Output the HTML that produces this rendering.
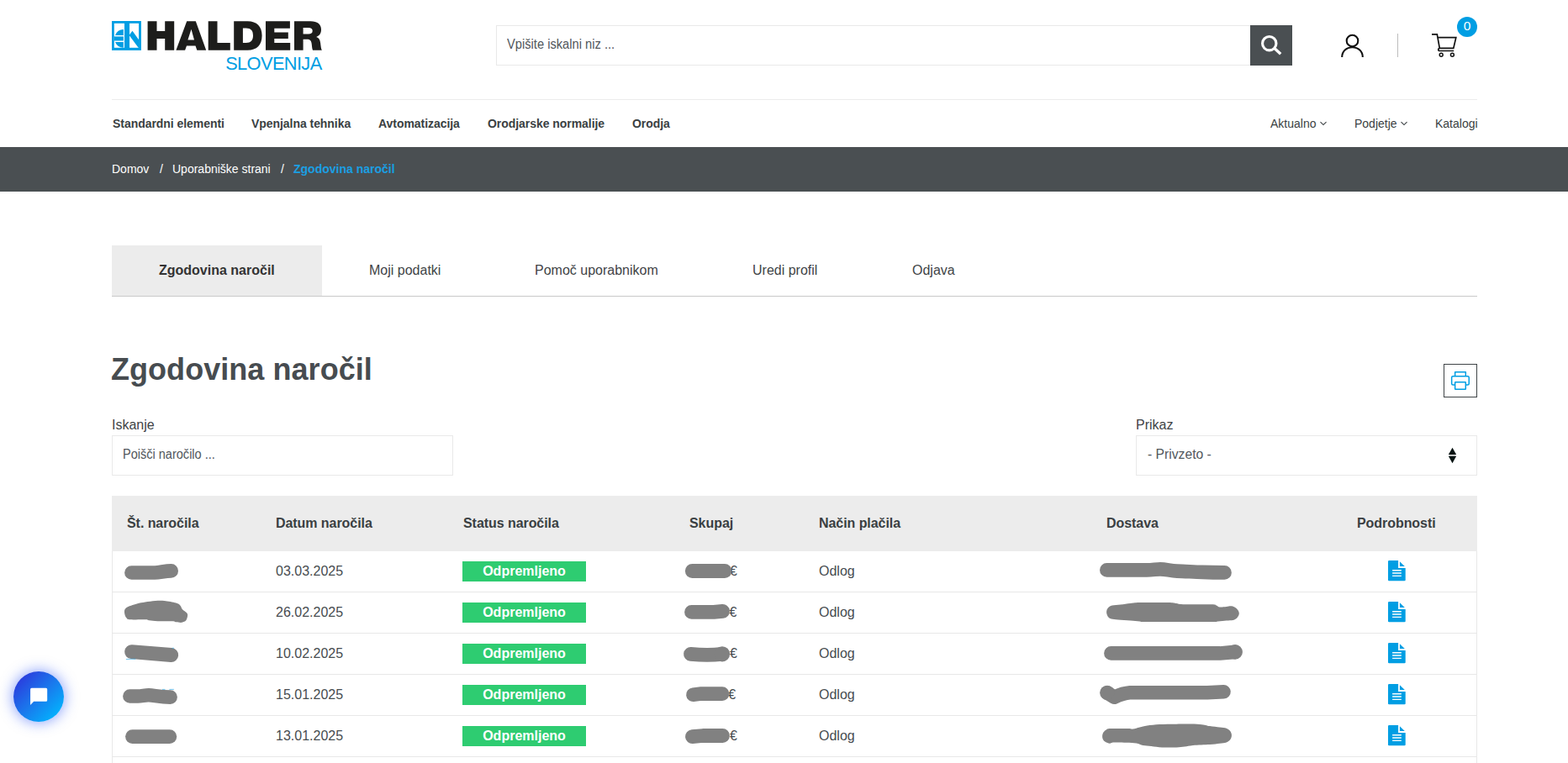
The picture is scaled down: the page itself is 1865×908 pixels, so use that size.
<!DOCTYPE html>
<html lang="sl">
<head>
<meta charset="utf-8">
<title>Zgodovina naročil</title>
<style>
*{box-sizing:border-box;margin:0;padding:0}
html,body{width:1865px;height:908px;overflow:hidden;background:#fff}
body{font-family:"Liberation Sans",sans-serif;color:#3f4447;position:relative}
.abs{position:absolute;white-space:nowrap}
/* header */
#logo{left:133px;top:25px;width:252px;height:60px}
#search{left:590px;top:30px;width:898px;height:48px;border:1px solid #e9e9e9;background:#fff}
#search span{position:absolute;left:12px;top:13.4px;font-size:16px;line-height:18px;color:#52575c;transform-origin:0 50%;transform:scaleX(.918)}
#sbtn{left:1487px;top:30px;width:50px;height:48px;background:#4a4f52}
#hline{left:133px;top:118px;width:1624px;height:1px;background:#ececec}
.nav{top:139px;font-size:14px;line-height:16px;font-weight:bold;color:#3a3f42;letter-spacing:-.05px}
.navr{top:139px;font-size:14px;line-height:16px;color:#3a3f42}
/* breadcrumb */
#crumb{left:0;top:175px;width:1865px;height:53px;background:#4a4f52}
.bc{top:193px;font-size:14px;line-height:16px;color:#fff}
/* tabs */
#tabline{left:133px;top:352px;width:1624px;height:1px;background:#c9c9c9}
#tabact{left:133px;top:292px;width:250px;height:60px;background:#ececec}
.tab{top:313px;font-size:16px;line-height:18px;color:#3f4447}
h1{position:absolute;left:132px;top:419px;font-size:36px;line-height:42px;font-weight:bold;color:#474c50;white-space:nowrap;letter-spacing:.05px}
.lbl{font-size:16px;line-height:18px;color:#3f4447}
.inp{height:48px;border:1px solid #e9e9e9;background:#fff}
.inp span{position:absolute;left:12px;top:13.4px;font-size:16px;line-height:18px;color:#52575c;transform-origin:0 50%;transform:scaleX(.908)}
#printb{left:1717px;top:433px;width:40px;height:40px;border:1px solid #3f4447}
/* table */
#thead{left:133px;top:590px;width:1624px;height:66px;background:#ececec}
.th{top:614px;font-size:16px;line-height:18px;font-weight:bold;color:#3a3f42;letter-spacing:-.06px}
.row{left:133px;width:1624px;height:49px;border-left:1px solid #e8e8e8;border-right:1px solid #e8e8e8;border-bottom:1px solid #e8e8e8}
.td{font-size:16px;line-height:18px;color:#474c50}
.badge{left:550px;width:147px;height:24px;background:#2ecc71;color:#fff;font-weight:bold;font-size:16px;line-height:23px;text-align:center}
#chat{left:16px;top:799px;width:60px;height:60px;border-radius:50%;background:linear-gradient(135deg,#2c36dc 8%,#1a78ec 50%,#00b8ff 92%);box-shadow:0 0 15px 2px rgba(50,90,250,.5)}
</style>
</head>
<body>

<!-- LOGO -->
<svg id="logo" class="abs" viewBox="133 25 252 60">
  <rect x="133" y="25" width="34.9" height="34.9" fill="#009ee3"/>
  <rect x="135.8" y="27.8" width="12.2" height="29" fill="#fff"/>
  <rect x="154.05" y="27.8" width="11" height="29" fill="#fff"/>
  <g fill="#009ee3">
    <path d="M146.9 34.95 A10.9 10.9 0 0 0 137.0 41.9 L146.9 41.9 Z"/>
    <path d="M135.8 43.4 H146.9 V48.5 H135.8 Z"/>
    <path d="M137.0 50.0 A10.9 10.9 0 0 0 146.9 56.8 L146.9 50.0 Z"/>
    <path d="M154.05 41.3 L157.5 36.7 L165.06 47.2 L165.06 56.8 L164.6 56.8 L154.05 42.6 Z"/>
  </g>
  <g fill="#1d1d1b">
    <!-- H -->
    <path d="M175.6 25.2 H186.5 V37.1 H196.2 V25.2 H207.2 V59.8 H196.2 V45.95 H186.5 V59.8 H175.6 Z"/>
    <!-- A -->
    <path d="M222.2 25.2 H232.8 L245.2 59.8 H234.3 L232.5 54.5 H222.0 L220.1 59.8 H209.4 Z M227.5 34.7 L223.4 47.4 H231.0 Z" fill-rule="evenodd"/>
    <!-- L -->
    <path d="M247.7 25.2 H258.5 V50.96 H273.8 V59.8 H247.7 Z"/>
    <!-- D -->
    <path d="M278.2 25.2 H294.5 C305.5 25.2 311.6 31.5 311.6 42.3 C311.6 53.5 305.5 59.8 294.5 59.8 H278.2 Z M288.9 33.6 V51.0 H292.6 C298.4 51.0 301.0 48.2 301.0 42.3 C301.0 36.4 298.4 33.6 292.6 33.6 Z" fill-rule="evenodd"/>
    <!-- E -->
    <path d="M316.0 25.2 H344.9 V33.7 H326.3 V38.6 H342.8 V45.95 H326.3 V51.1 H345.2 V59.8 H316.0 Z"/>
    <!-- R -->
    <path d="M350.0 25.2 H369.5 C377.5 25.2 382.0 28.8 382.0 35.0 C382.0 39.6 380.0 42.6 376.2 43.9 C379.4 45.0 380.6 47.2 381.1 51.0 C381.6 55.0 381.8 57.8 382.9 59.8 H372.0 C371.2 57.8 371.1 55.2 370.7 52.2 C370.2 48.3 368.8 46.8 365.2 46.8 H360.6 V59.8 H350.0 Z M360.6 33.1 V40.5 H366.8 C370.1 40.5 371.7 39.3 371.7 36.8 C371.7 34.3 370.1 33.1 366.8 33.1 Z" fill-rule="evenodd"/>
  </g>
  <text x="268.2" y="82.55" font-family="Liberation Sans, sans-serif" font-size="21.8" fill="#009ee3" textLength="115" lengthAdjust="spacing">SLOVENIJA</text>
</svg>

<!-- SEARCH -->
<div id="search" class="abs"><span>Vpišite iskalni niz ...</span></div>
<div id="sbtn" class="abs">
  <svg width="50" height="48" viewBox="0 0 50 48"><circle cx="22.75" cy="21.7" r="8.2" fill="none" stroke="#fff" stroke-width="3.1"/><path d="M28.9 27.6 L36.2 34.3" stroke="#fff" stroke-width="3.4" stroke-linecap="butt"/></svg>
</div>

<!-- user / cart -->
<svg class="abs" style="left:1592px;top:38px" width="34" height="32" viewBox="1592 38 34 32"><circle cx="1608.5" cy="48.5" r="6.8" fill="none" stroke="#111" stroke-width="2.1"/><path d="M1596.2 68 C1596.2 61 1601.5 56.3 1608.5 56.3 C1615.5 56.3 1620.8 61 1620.8 68" fill="none" stroke="#111" stroke-width="2.1"/></svg>
<div class="abs" style="left:1662px;top:40px;width:1px;height:28px;background:#bdbdbd"></div>
<svg class="abs" style="left:1700px;top:36px" width="36" height="36" viewBox="1700 36 36 36"><path d="M1703 40.8 H1709.3 L1712.3 57.4 H1728.8 L1731.8 44.6 H1710.2 M1712.3 57.4 C1710.3 57.6 1710.1 60.5 1712.4 60.5 H1729.2" fill="none" stroke="#111" stroke-width="1.7" stroke-linejoin="miter"/><circle cx="1714.2" cy="65.2" r="1.95" fill="none" stroke="#111" stroke-width="1.5"/><circle cx="1727.4" cy="65.2" r="1.95" fill="none" stroke="#111" stroke-width="1.5"/></svg>
<div class="abs" style="left:1733px;top:20px;width:24px;height:24px;border-radius:50%;background:#009ee3;color:#fff;font-size:15.5px;line-height:21px;text-align:center">0</div>

<div id="hline" class="abs"></div>

<!-- NAV -->
<div class="abs nav" style="left:134px">Standardni elementi</div>
<div class="abs nav" style="left:299px">Vpenjalna tehnika</div>
<div class="abs nav" style="left:450px">Avtomatizacija</div>
<div class="abs nav" style="left:580px">Orodjarske normalije</div>
<div class="abs nav" style="left:752px">Orodja</div>
<div class="abs navr" style="left:1511px">Aktualno</div>
<svg class="abs" style="left:1569px;top:143px" width="10" height="8" viewBox="0 0 10 8"><path d="M1.5 2.2 L5 5.6 L8.5 2.2" fill="none" stroke="#3a3f42" stroke-width="1.1"/></svg>
<div class="abs navr" style="left:1611px">Podjetje</div>
<svg class="abs" style="left:1665px;top:143px" width="10" height="8" viewBox="0 0 10 8"><path d="M1.5 2.2 L5 5.6 L8.5 2.2" fill="none" stroke="#3a3f42" stroke-width="1.1"/></svg>
<div class="abs navr" style="left:1707px">Katalogi</div>

<!-- BREADCRUMB -->
<div id="crumb" class="abs"></div>
<div class="abs bc" style="left:133px">Domov</div>
<div class="abs bc" style="left:190px">/</div>
<div class="abs bc" style="left:205px">Uporabniške strani</div>
<div class="abs bc" style="left:334px">/</div>
<div class="abs bc" style="left:349px;color:#1a9fe3;font-weight:bold">Zgodovina naročil</div>

<!-- TABS -->
<div id="tabact" class="abs"></div>
<div id="tabline" class="abs"></div>
<div class="abs tab" style="left:189px;font-weight:bold;color:#333">Zgodovina naročil</div>
<div class="abs tab" style="left:439px">Moji podatki</div>
<div class="abs tab" style="left:636px">Pomoč uporabnikom</div>
<div class="abs tab" style="left:895px">Uredi profil</div>
<div class="abs tab" style="left:1085px">Odjava</div>

<h1>Zgodovina naročil</h1>

<div id="printb" class="abs">
  <svg width="38" height="38" viewBox="0 0 38 38"><g fill="none" stroke="#009ee3" stroke-width="1.5" stroke-linejoin="round"><path d="M12.65 13.8 V8.65 H25.3 V13.8"/><path d="M12.65 24.1 H10.2 Q8.65 24.1 8.65 22.6 V15.3 Q8.65 13.8 10.2 13.8 H27.7 Q29.25 13.8 29.25 15.3 V22.6 Q29.25 24.1 27.7 24.1 H25.3"/><rect x="12.65" y="20.8" width="12.65" height="8.45" rx="0.5"/></g></svg>
</div>

<div class="abs lbl" style="left:133px;top:497px">Iskanje</div>
<div class="abs inp" style="left:133px;top:518px;width:406px"><span>Poišči naročilo ...</span></div>
<div class="abs lbl" style="left:1351px;top:497px">Prikaz</div>
<div class="abs inp" style="left:1351px;top:518px;width:406px"><span style="left:12.6px;transform:scaleX(.98)">- Privzeto -</span>
  <svg style="position:absolute;left:365px;top:10px" width="20" height="28" viewBox="365 10 20 28"><rect x="372" y="22" width="7" height="1.9" fill="#dcdcdc"/><path d="M375.5 13.7 L380.2 22.1 H370.8 Z M375.5 32.2 L380.2 23.8 H370.8 Z" fill="#061312"/></svg>
</div>

<!-- TABLE -->
<div id="thead" class="abs"></div>
<div class="abs th" style="left:151px">Št. naročila</div>
<div class="abs th" style="left:328px">Datum naročila</div>
<div class="abs th" style="left:551px">Status naročila</div>
<div class="abs th" style="left:820px">Skupaj</div>
<div class="abs th" style="left:974px">Način plačila</div>
<div class="abs th" style="left:1316px">Dostava</div>
<div class="abs th" style="left:1614px">Podrobnosti</div>

<div class="abs row" style="top:656px"></div>
<div class="abs td" style="left:328px;top:671px">03.03.2025</div>
<div class="abs badge" style="top:668px">Odpremljeno</div>
<div class="abs td" style="left:868.0px;top:671px">€</div>
<div class="abs td" style="left:974px;top:671px">Odlog</div>
<div class="abs row" style="top:705px"></div>
<div class="abs td" style="left:328px;top:720px">26.02.2025</div>
<div class="abs badge" style="top:717px">Odpremljeno</div>
<div class="abs td" style="left:867.5px;top:720px">€</div>
<div class="abs td" style="left:974px;top:720px">Odlog</div>
<div class="abs row" style="top:754px"></div>
<div class="abs td" style="left:328px;top:769px">10.02.2025</div>
<div class="abs badge" style="top:766px">Odpremljeno</div>
<div class="abs td" style="left:868.0px;top:769px">€</div>
<div class="abs td" style="left:974px;top:769px">Odlog</div>
<div class="abs row" style="top:803px"></div>
<div class="abs td" style="left:328px;top:818px">15.01.2025</div>
<div class="abs badge" style="top:815px">Odpremljeno</div>
<div class="abs td" style="left:866.3px;top:818px">€</div>
<div class="abs td" style="left:974px;top:818px">Odlog</div>
<div class="abs row" style="top:852px"></div>
<div class="abs td" style="left:328px;top:867px">13.01.2025</div>
<div class="abs badge" style="top:864px">Odpremljeno</div>
<div class="abs td" style="left:868.0px;top:867px">€</div>
<div class="abs td" style="left:974px;top:867px">Odlog</div>
<div class="abs row" style="top:901px;height:10px;border-bottom:0"></div>
<svg class="abs" style="left:0;top:0" width="1865" height="908" viewBox="0 0 1865 908">
<defs><g id="doc"><path d="M1.2 0 H12.1 V8.85 H20.7 V23.1 Q20.7 24.25 19.5 24.25 H1.2 Q0 24.25 0 23.1 V1.2 Q0 0 1.2 0 Z M13.9 1.1 L19.8 6.85 H13.9 Z" fill="#009ee3"/><path d="M5.1 10.95 H15.8 V12.35 H5.1 Z M5.1 14.2 H15.8 V15.8 H5.1 Z M5.1 17.75 H15.8 V19.05 H5.1 Z" fill="#fff"/></g></defs>
<use href="#doc" x="1651" y="667.05"/>
<use href="#doc" x="1651" y="716.05"/>
<use href="#doc" x="1651" y="765.05"/>
<use href="#doc" x="1651" y="814.05"/>
<use href="#doc" x="1651" y="863.05"/>
<g fill="none" stroke="#818181" stroke-linecap="round" stroke-linejoin="round">
<path d="M156.4 681.5 H184 C190 681.5 196 679.4 203.7 679.4" stroke-width="16.6"/>
<path d="M156.6 775.7 L203.7 779.5" stroke-width="16.9"/>
<path d="M154.4 828.5 H164 C169 828.3 173 827.2 177 827.3 C183 827.4 190 829.6 202.6 829.6" stroke-width="16.6"/>
<path d="M157.4 876.6 H201.9" stroke-width="16.65"/>
<path d="M823.3 679.5 H862" stroke-width="16.85"/>
<path d="M822.5 728.4 H849 L859.6 727.4" stroke-width="16.8"/>
<path d="M821.5 778.4 C835 779.6 848 779.6 858.6 778.4" stroke-width="16.8"/>
<path d="M824.4 826.7 L834 825.6 H859.1" stroke-width="16.6"/>
<path d="M823.4 876.6 L836 875.5 H859.5" stroke-width="16.8"/>
<path d="M1316.4 678.45 H1364 C1371 678.45 1375 677.3 1380 677.3 C1387 677.3 1392 679.4 1400 679.6 C1410 679.8 1420 680.7 1430 680.9 C1440 681.3 1450 681.4 1456.5 681.4" stroke-width="16.7"/>
<path d="M1321.45 777.45 H1451 L1469 775.9" stroke-width="16.7"/>
<path d="M1316.9 824.4 L1325.4 829.7 C1332 826.6 1338 824.7 1344 824.3 H1436 L1455.5 823.3" stroke-width="16.6"/>
</g>
<g fill="#818181">
<circle cx="859" cy="778.3" r="9.1"/>
<circle cx="1469.1" cy="775.9" r="8.8"/>
<circle cx="1316.9" cy="824.4" r="8.7"/>
<path d="M148.1 729.4C148.0 727.4 147.5 725.2 149.9 723.4C152.4 721.6 159.0 719.6 162.8 718.5C166.6 717.3 169.1 717.1 172.7 716.5C176.3 715.9 180.8 715.3 184.6 715.0C188.4 714.8 191.4 714.6 195.5 715.0C199.6 715.4 206.2 716.6 209.4 717.5C212.5 718.4 213.1 719.2 214.3 720.5C215.6 721.7 215.5 723.4 216.8 724.9C218.1 726.4 221.2 728.1 222.3 729.4C223.3 730.7 223.2 731.4 223.1 732.8C222.9 734.3 222.4 737.0 221.3 738.3C220.1 739.6 218.3 740.4 216.3 740.8C214.3 741.1 211.4 740.5 209.4 740.3C207.4 740.0 208.1 739.5 204.4 739.3C200.8 739.1 192.0 739.5 187.6 739.3C183.1 739.1 180.1 738.6 177.7 738.3C175.2 738.0 176.5 737.5 172.7 737.3C168.9 737.1 158.6 737.6 154.9 737.3C151.1 737.0 151.5 736.6 150.4 735.3C149.3 734.0 148.2 731.4 148.1 729.4Z"/>
<path d="M1316.1 728.5C1316.1 726.7 1316.7 724.8 1317.9 723.5C1319.0 722.2 1320.3 721.2 1322.8 720.5C1325.3 719.9 1329.1 719.9 1332.7 719.5C1336.4 719.1 1340.8 718.4 1344.6 718.0C1348.4 717.6 1348.1 717.2 1355.6 717.0C1363.0 716.9 1382.0 716.9 1389.3 717.0C1396.6 717.2 1396.2 717.7 1399.2 718.0C1402.2 718.4 1400.2 719.0 1407.1 719.2C1414.1 719.4 1434.3 719.0 1440.9 719.2C1447.5 719.4 1445.2 720.0 1446.8 720.5C1448.5 721.1 1448.8 722.3 1450.8 722.5C1452.8 722.7 1456.4 722.2 1458.7 722.0C1461.0 721.8 1462.7 721.0 1464.7 721.3C1466.7 721.6 1469.1 722.6 1470.6 724.0C1472.2 725.3 1473.6 727.6 1473.8 729.4C1474.0 731.3 1472.8 733.5 1471.6 734.9C1470.4 736.3 1468.8 737.3 1466.7 737.9C1464.5 738.5 1461.7 738.1 1458.7 738.4C1455.8 738.6 1452.1 739.1 1448.8 739.4C1445.5 739.6 1452.9 739.8 1438.9 739.9C1424.8 739.9 1378.4 739.9 1364.5 739.9C1350.6 739.8 1358.9 739.6 1355.6 739.4C1352.2 739.1 1348.9 738.7 1344.6 738.4C1340.3 738.0 1333.6 737.7 1329.8 737.4C1326.0 737.1 1323.8 737.0 1321.8 736.4C1319.8 735.8 1318.8 735.2 1317.9 733.9C1316.9 732.6 1316.1 730.2 1316.1 728.5Z"/>
<path d="M1311.1 876.0C1311.2 874.6 1311.6 872.8 1312.4 871.6C1313.2 870.3 1314.5 869.1 1315.9 868.4C1317.3 867.7 1316.5 867.3 1320.8 867.1C1325.1 866.9 1337.2 867.0 1341.7 867.1C1346.1 867.2 1345.3 867.9 1347.6 867.6C1349.9 867.4 1352.7 866.3 1355.6 865.6C1358.4 865.0 1360.5 864.2 1364.5 863.6C1368.5 863.1 1373.6 862.5 1379.4 862.1C1385.2 861.8 1391.3 861.7 1399.2 861.7C1407.1 861.6 1420.4 861.5 1427.0 861.9C1433.6 862.4 1434.9 863.5 1438.9 864.1C1442.9 864.7 1447.5 865.2 1450.8 865.6C1454.1 866.1 1456.7 866.1 1458.7 866.8C1460.8 867.6 1462.2 868.8 1463.2 870.1C1464.2 871.4 1464.8 873.0 1464.9 874.5C1465.0 876.1 1464.7 878.0 1463.7 879.5C1462.7 881.0 1460.9 882.6 1458.7 883.5C1456.6 884.3 1454.1 884.3 1450.8 884.7C1447.5 885.1 1444.2 885.6 1438.9 886.0C1433.6 886.3 1424.0 886.5 1419.0 886.9C1414.1 887.4 1412.4 888.0 1409.1 888.4C1405.8 888.8 1403.7 889.3 1399.2 889.4C1394.7 889.6 1387.3 889.7 1382.3 889.4C1377.4 889.2 1373.2 888.4 1369.4 887.9C1365.6 887.5 1362.5 887.5 1359.5 886.9C1356.5 886.4 1354.9 885.0 1351.6 884.5C1348.3 883.9 1344.1 883.8 1339.7 883.7C1335.2 883.5 1328.1 883.3 1324.8 883.5C1321.5 883.6 1321.5 884.7 1319.8 884.7C1318.2 884.6 1316.2 883.8 1314.9 883.0C1313.6 882.2 1312.5 881.2 1311.9 880.0C1311.3 878.8 1311.0 877.4 1311.1 876.0Z"/>
</g>
<g stroke="#1a9fe3" stroke-width="0.6" fill="none"><path d="M149.9 784.5 L161.3 784.2"/><path d="M204.6 771.3 H207"/><path d="M193 820.4 H196.5 M201.4 820.4 H206.9"/></g>
</svg>

<!-- CHAT -->
<div id="chat" class="abs">
  <svg width="60" height="60" viewBox="0 0 60 60"><path d="M21.6 19.8 H38.7 Q40.2 19.8 40.2 21.3 V34.3 Q40.2 35.8 38.7 35.8 H24.2 L20.1 39.9 V21.3 Q20.1 19.8 21.6 19.8 Z" fill="#fff"/></svg>
</div>

</body>
</html>
